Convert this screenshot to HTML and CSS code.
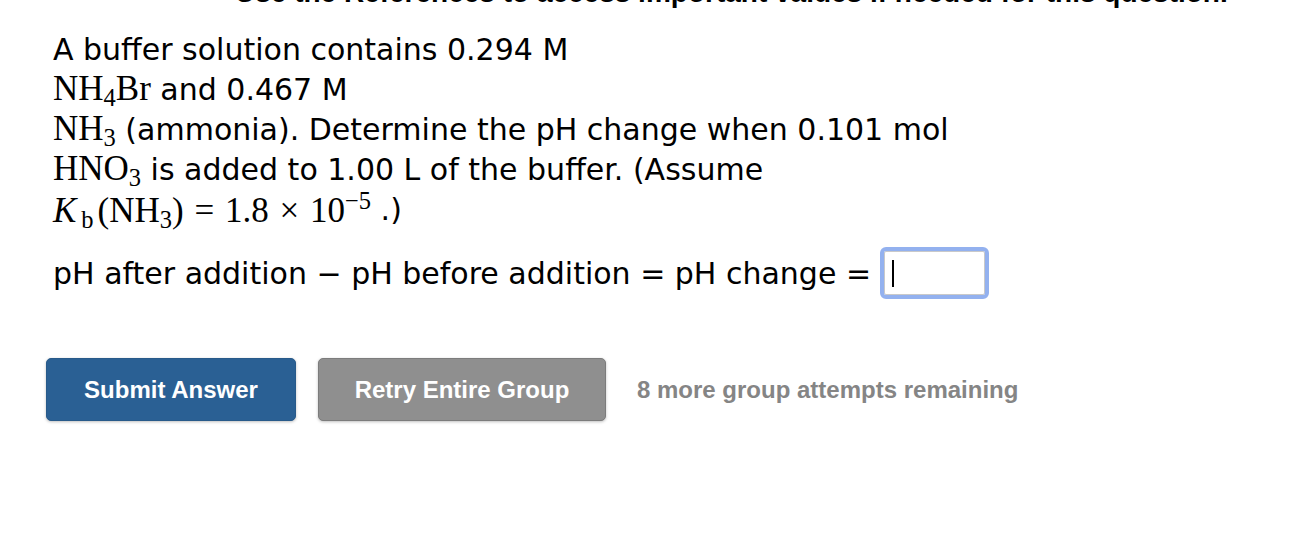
FILE: index.html
```html
<!DOCTYPE html>
<html>
<head>
<meta charset="utf-8">
<link rel="stylesheet" href="styles.css">
</head>
<body>
<div class="page">
  <div class="ref-note">Use the References to access important values if needed for this question.</div>
  <div class="question">
    <p class="prompt">A buffer solution contains 0.294 M<br>
      <span class="m">NH<sub>4</sub>Br</span> and 0.467 M<br>
      <span class="m">NH<sub>3</sub></span> (ammonia). Determine the pH change when 0.101 mol<br>
      <span class="m">HNO<sub>3</sub></span> is added to 1.00 L of the buffer. (Assume<br>
      <span class="m kb"><i>K</i><sub class="kb-sub">b</sub>(NH<sub>3</sub>) <span class="op">=</span> 1.8 <span class="op">×</span> 10<sup>−5</sup></span> .)</p>
    <div class="answer-row">
      <span>pH after addition − pH before addition = pH change =</span>
      <div class="field"><span class="caret"></span></div>
    </div>
  </div>
  <div class="actions">
    <button class="btn btn-primary">Submit Answer</button>
    <button class="btn btn-secondary">Retry Entire Group</button>
    <span class="attempts">8 more group attempts remaining</span>
  </div>
</div>
</body>
</html>
```
FILE: styles.css
```css
html, body {
  margin: 0;
  padding: 0;
  background: #ffffff;
}
.page {
  width: 1290px;
  height: 534px;
  overflow: hidden;
  font-family: "DejaVu Sans", Verdana, sans-serif;
  color: #000;
}
.ref-note {
  margin-top: -22px;
  padding-left: 235px;
  font-family: "Liberation Sans", Arial, sans-serif;
  font-weight: bold;
  font-size: 28px;
  line-height: 30px;
  white-space: nowrap;
}
.question {
  padding-left: 53px;
  margin-top: 22px;
}
.prompt {
  margin: 0;
  font-size: 30px;
  line-height: 40px;
}
.m {
  font-family: "Liberation Serif", "Times New Roman", serif;
  font-size: 35px;
  line-height: 0;
}
.m sub {
  font-size: 0.7em;
  vertical-align: -0.26em;
  line-height: 0;
}
.m sub.kb-sub {
  margin-left: 5px;
  margin-right: 4px;
}
.m sup {
  font-size: 0.7em;
  vertical-align: 0.55em;
  line-height: 0;
}
.kb {
  position: relative;
  top: 2px;
}
.op {
  padding: 0 2px;
}
.answer-row {
  display: flex;
  align-items: center;
  gap: 13px;
  margin-top: 21px;
  font-size: 30px;
  height: 44px;
}
.field {
  width: 92px;
  height: 42px;
  background: #fff;
  border: 1px solid #c9c9c9;
  border-radius: 2px;
  outline: 4px solid #93b1ef;
  outline-offset: 0;
  display: flex;
  align-items: center;
  padding-left: 7px;
  box-sizing: content-box;
}
.caret {
  width: 2px;
  height: 27px;
  background: #000;
}
.actions {
  display: flex;
  align-items: center;
  padding-left: 46px;
  margin-top: 63px;
}
.btn {
  height: 63px;
  border-radius: 5px;
  font-family: "Liberation Sans", Arial, sans-serif;
  font-weight: bold;
  font-size: 24px;
  color: #fff;
  cursor: pointer;
  box-shadow: 0 1px 3px rgba(0,0,0,0.25);
}
.btn-primary {
  width: 250px;
  background: #2a6094;
  border: 1px solid #285a8a;
  margin-right: 22px;
}
.btn-secondary {
  width: 288px;
  background: #8f8f8f;
  border: 1px solid #7c7c7c;
  margin-right: 31px;
}
.attempts {
  font-family: "Liberation Sans", Arial, sans-serif;
  font-weight: bold;
  font-size: 24px;
  color: #858585;
}
```
